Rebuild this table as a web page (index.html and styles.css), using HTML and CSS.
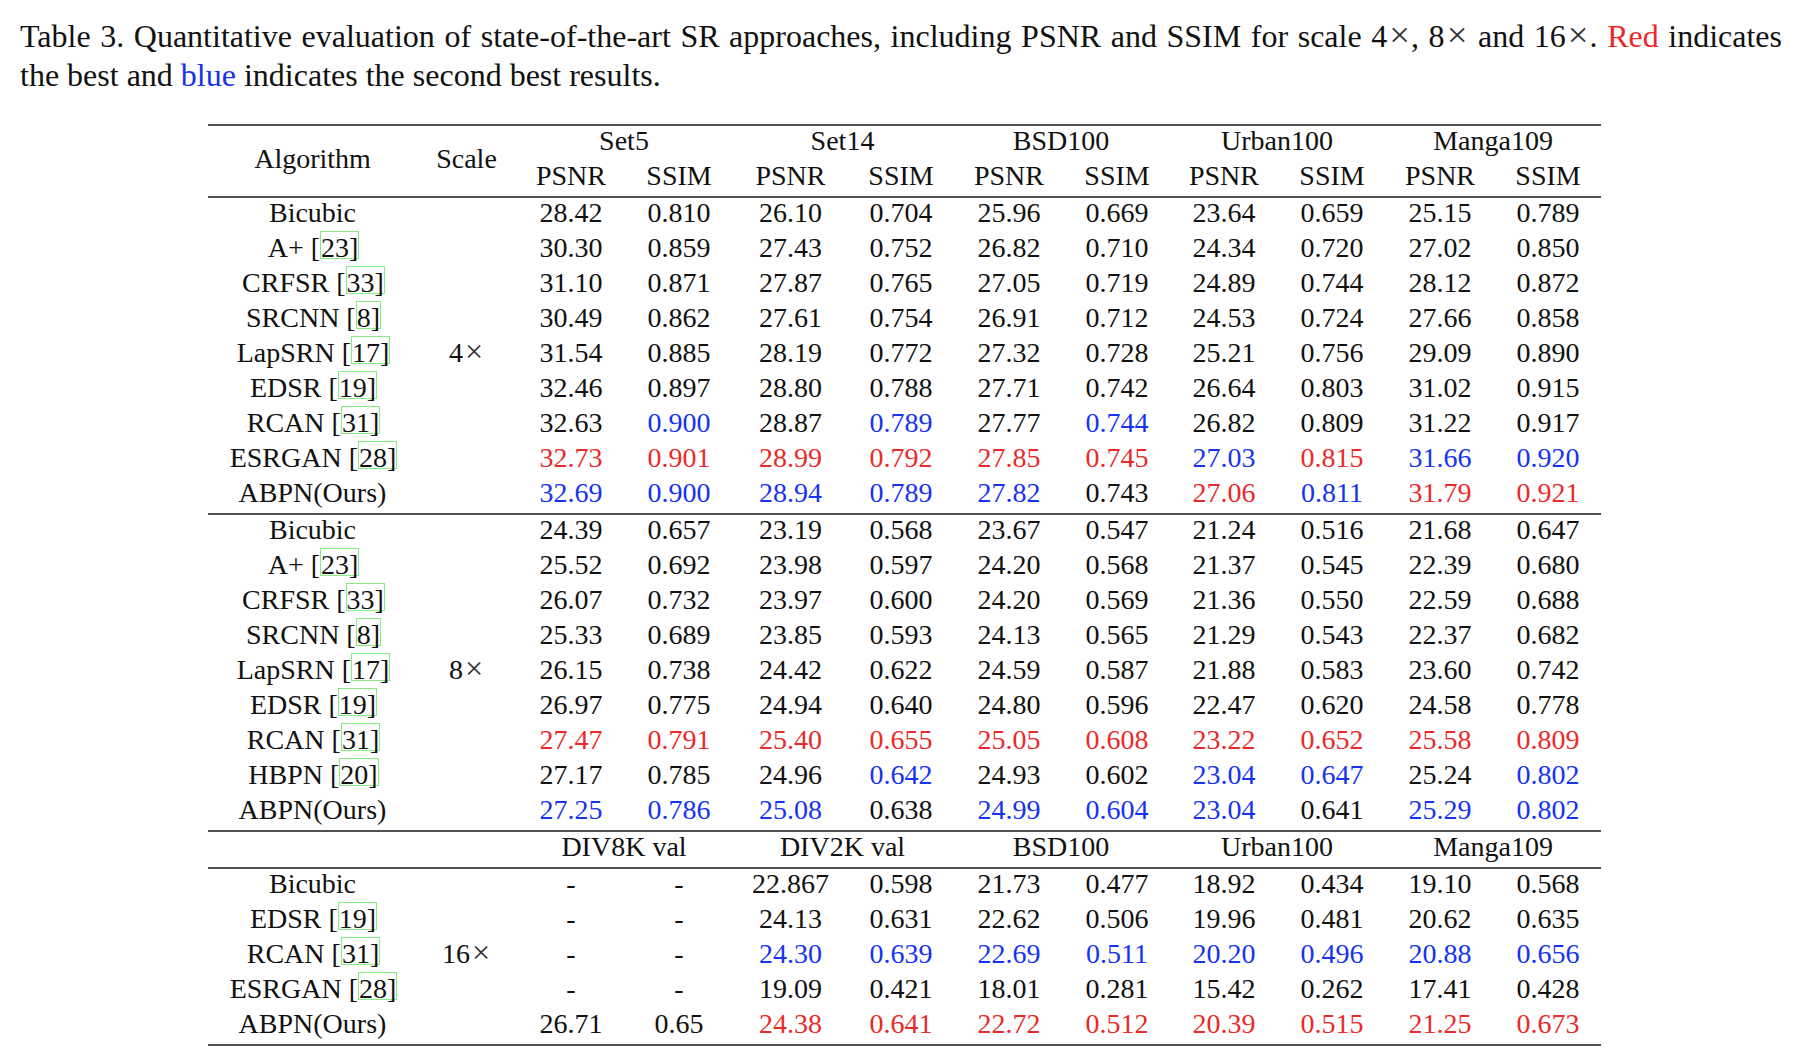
FILE: index.html
```html
<!DOCTYPE html>
<html lang="en">
<head>
<meta charset="utf-8">
<title>Table 3</title>
<link rel="stylesheet" href="styles.css">
</head>
<body>
<div class="page">
<p class="caption"><span class="line-1">Table 3. Quantitative evaluation of state-of-the-art SR approaches, including PSNR and SSIM for scale 4<span class="x">×</span>, 8<span class="x">×</span> and 16<span class="x">×</span>. <span class="r">Red</span> indicates</span> the best and <span class="b">blue</span> indicates the second best results.</p>
<table class="results">
<colgroup>
<col class="c-alg"><col class="c-scale">
<col class="c-110"><col class="c-106">
<col class="c-117"><col class="c-104">
<col class="c-112"><col class="c-104">
<col class="c-110"><col class="c-106">
<col class="c-110"><col class="c-106">
</colgroup>
<thead>
<tr><th rowspan="2" class="mid">Algorithm</th><th rowspan="2" class="mid">Scale</th><th colspan="2">Set5</th><th colspan="2">Set14</th><th colspan="2">BSD100</th><th colspan="2">Urban100</th><th colspan="2">Manga109</th></tr>
<tr><th>PSNR</th><th>SSIM</th><th>PSNR</th><th>SSIM</th><th>PSNR</th><th>SSIM</th><th>PSNR</th><th>SSIM</th><th>PSNR</th><th>SSIM</th></tr>
</thead>
<tbody class="sec">
<tr><td>Bicubic</td><td rowspan="9" class="mid">4<span class="x">×</span></td><td>28.42</td><td>0.810</td><td>26.10</td><td>0.704</td><td>25.96</td><td>0.669</td><td>23.64</td><td>0.659</td><td>25.15</td><td>0.789</td></tr>
<tr><td>A+ [<span class="cite">23]</span></td><td>30.30</td><td>0.859</td><td>27.43</td><td>0.752</td><td>26.82</td><td>0.710</td><td>24.34</td><td>0.720</td><td>27.02</td><td>0.850</td></tr>
<tr><td>CRFSR [<span class="cite">33]</span></td><td>31.10</td><td>0.871</td><td>27.87</td><td>0.765</td><td>27.05</td><td>0.719</td><td>24.89</td><td>0.744</td><td>28.12</td><td>0.872</td></tr>
<tr><td>SRCNN [<span class="cite">8]</span></td><td>30.49</td><td>0.862</td><td>27.61</td><td>0.754</td><td>26.91</td><td>0.712</td><td>24.53</td><td>0.724</td><td>27.66</td><td>0.858</td></tr>
<tr><td>LapSRN [<span class="cite">17]</span></td><td>31.54</td><td>0.885</td><td>28.19</td><td>0.772</td><td>27.32</td><td>0.728</td><td>25.21</td><td>0.756</td><td>29.09</td><td>0.890</td></tr>
<tr><td>EDSR [<span class="cite">19]</span></td><td>32.46</td><td>0.897</td><td>28.80</td><td>0.788</td><td>27.71</td><td>0.742</td><td>26.64</td><td>0.803</td><td>31.02</td><td>0.915</td></tr>
<tr><td>RCAN [<span class="cite">31]</span></td><td>32.63</td><td class="b">0.900</td><td>28.87</td><td class="b">0.789</td><td>27.77</td><td class="b">0.744</td><td>26.82</td><td>0.809</td><td>31.22</td><td>0.917</td></tr>
<tr><td>ESRGAN [<span class="cite">28]</span></td><td class="r">32.73</td><td class="r">0.901</td><td class="r">28.99</td><td class="r">0.792</td><td class="r">27.85</td><td class="r">0.745</td><td class="b">27.03</td><td class="r">0.815</td><td class="b">31.66</td><td class="b">0.920</td></tr>
<tr><td>ABPN(Ours)</td><td class="b">32.69</td><td class="b">0.900</td><td class="b">28.94</td><td class="b">0.789</td><td class="b">27.82</td><td>0.743</td><td class="r">27.06</td><td class="b">0.811</td><td class="r">31.79</td><td class="r">0.921</td></tr>
</tbody>
<tbody class="sec">
<tr><td>Bicubic</td><td rowspan="9" class="mid">8<span class="x">×</span></td><td>24.39</td><td>0.657</td><td>23.19</td><td>0.568</td><td>23.67</td><td>0.547</td><td>21.24</td><td>0.516</td><td>21.68</td><td>0.647</td></tr>
<tr><td>A+ [<span class="cite">23]</span></td><td>25.52</td><td>0.692</td><td>23.98</td><td>0.597</td><td>24.20</td><td>0.568</td><td>21.37</td><td>0.545</td><td>22.39</td><td>0.680</td></tr>
<tr><td>CRFSR [<span class="cite">33]</span></td><td>26.07</td><td>0.732</td><td>23.97</td><td>0.600</td><td>24.20</td><td>0.569</td><td>21.36</td><td>0.550</td><td>22.59</td><td>0.688</td></tr>
<tr><td>SRCNN [<span class="cite">8]</span></td><td>25.33</td><td>0.689</td><td>23.85</td><td>0.593</td><td>24.13</td><td>0.565</td><td>21.29</td><td>0.543</td><td>22.37</td><td>0.682</td></tr>
<tr><td>LapSRN [<span class="cite">17]</span></td><td>26.15</td><td>0.738</td><td>24.42</td><td>0.622</td><td>24.59</td><td>0.587</td><td>21.88</td><td>0.583</td><td>23.60</td><td>0.742</td></tr>
<tr><td>EDSR [<span class="cite">19]</span></td><td>26.97</td><td>0.775</td><td>24.94</td><td>0.640</td><td>24.80</td><td>0.596</td><td>22.47</td><td>0.620</td><td>24.58</td><td>0.778</td></tr>
<tr><td>RCAN [<span class="cite">31]</span></td><td class="r">27.47</td><td class="r">0.791</td><td class="r">25.40</td><td class="r">0.655</td><td class="r">25.05</td><td class="r">0.608</td><td class="r">23.22</td><td class="r">0.652</td><td class="r">25.58</td><td class="r">0.809</td></tr>
<tr><td>HBPN [<span class="cite">20]</span></td><td>27.17</td><td>0.785</td><td>24.96</td><td class="b">0.642</td><td>24.93</td><td>0.602</td><td class="b">23.04</td><td class="b">0.647</td><td>25.24</td><td class="b">0.802</td></tr>
<tr><td>ABPN(Ours)</td><td class="b">27.25</td><td class="b">0.786</td><td class="b">25.08</td><td>0.638</td><td class="b">24.99</td><td class="b">0.604</td><td class="b">23.04</td><td>0.641</td><td class="b">25.29</td><td class="b">0.802</td></tr>
</tbody>
<tbody class="sec">
<tr><td></td><td></td><td colspan="2">DIV8K val</td><td colspan="2">DIV2K val</td><td colspan="2">BSD100</td><td colspan="2">Urban100</td><td colspan="2">Manga109</td></tr>
</tbody>
<tbody class="sec">
<tr><td>Bicubic</td><td rowspan="5" class="mid">16<span class="x">×</span></td><td>-</td><td>-</td><td>22.867</td><td>0.598</td><td>21.73</td><td>0.477</td><td>18.92</td><td>0.434</td><td>19.10</td><td>0.568</td></tr>
<tr><td>EDSR [<span class="cite">19]</span></td><td>-</td><td>-</td><td>24.13</td><td>0.631</td><td>22.62</td><td>0.506</td><td>19.96</td><td>0.481</td><td>20.62</td><td>0.635</td></tr>
<tr><td>RCAN [<span class="cite">31]</span></td><td>-</td><td>-</td><td class="b">24.30</td><td class="b">0.639</td><td class="b">22.69</td><td class="b">0.511</td><td class="b">20.20</td><td class="b">0.496</td><td class="b">20.88</td><td class="b">0.656</td></tr>
<tr><td>ESRGAN [<span class="cite">28]</span></td><td>-</td><td>-</td><td>19.09</td><td>0.421</td><td>18.01</td><td>0.281</td><td>15.42</td><td>0.262</td><td>17.41</td><td>0.428</td></tr>
<tr><td>ABPN(Ours)</td><td>26.71</td><td>0.65</td><td class="r">24.38</td><td class="r">0.641</td><td class="r">22.72</td><td class="r">0.512</td><td class="r">20.39</td><td class="r">0.515</td><td class="r">21.25</td><td class="r">0.673</td></tr>
</tbody>
</table>
</div>
</body>
</html>
```
FILE: styles.css
```css
html, body {
  margin: 0;
  padding: 0;
  background: #ffffff;
}

.page {
  padding-top: 17px;
  font-family: "Liberation Serif", "Times New Roman", serif;
  color: #111111;
}

.caption {
  margin: 0 0 0 20px;
  width: 1762px;
  font-size: 32px;
  line-height: 39px;
}

.caption .line-1 {
  display: block;
  text-align: justify;
  text-align-last: justify;
}

.x {
  font-size: 1.15em;
  line-height: 1px;
  padding-left: 2px;
  padding-right: 1px;
  color: #333333;
}

.r { color: #ea2a2a; }
.b { color: #1633f2; }

.results {
  margin: 29px 0 0 208px;
  width: 1393px;
  table-layout: fixed;
  border-collapse: separate;
  border-spacing: 0;
  border-top: 2px solid #505050;
  border-bottom: 2px solid #505050;
  font-size: 28px;
}

.c-alg { width: 209px; }
.c-scale { width: 99px; }
.c-110 { width: 110px; }
.c-106 { width: 106px; }
.c-117 { width: 117px; }
.c-104 { width: 104px; }
.c-112 { width: 112px; }

.results th,
.results td {
  padding: 0 0 6px 0;
  line-height: 29px;
  height: 29px;
  text-align: center;
  vertical-align: top;
  font-weight: normal;
  white-space: nowrap;
}

.results .mid {
  vertical-align: middle;
}

.results .sec > tr:first-child > td {
  border-top: 2px solid #505050;
}

.cite {
  display: inline-block;
  height: 26px;
  line-height: 31px;
  border: 1px solid #86ee80;
  margin: -6px -2px -6px 0;
  vertical-align: baseline;
}
```
